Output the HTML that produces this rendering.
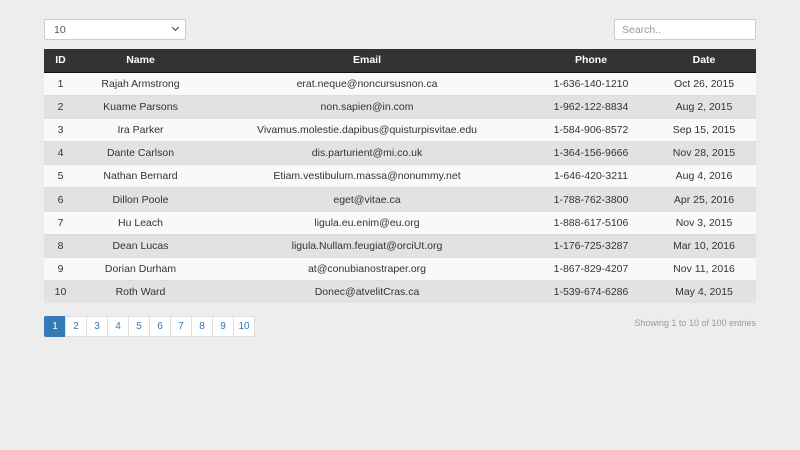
<!DOCTYPE html><html><head><style>
body{margin:0;background:#ededed;font-family:"Liberation Sans",sans-serif;font-size:10.5px;color:#333;width:800px;height:450px;position:relative;overflow:hidden}
.sel{position:absolute;left:44px;top:19px;width:142px;height:21px;background:#fff;border:1px solid #ccc;border-radius:2px;box-sizing:border-box;padding:4px 9px;color:#555}
.sel:after{content:"";position:absolute;right:7px;top:5px;width:4px;height:4px;border-right:1.3px solid #333;border-bottom:1.3px solid #333;transform:rotate(45deg)}
.srch{position:absolute;left:614px;top:19px;width:142px;height:21px;background:#fff;border:1px solid #ccc;border-radius:2px;box-sizing:border-box;padding:4px 7px;color:#999}
table{position:absolute;left:44px;top:49px;width:712px;border-collapse:collapse;table-layout:fixed}
th{background:#333;color:#fff;font-weight:bold;height:23px;padding:0;border-bottom:1px solid #111;box-sizing:border-box}
td{height:22.2px;padding:0;text-align:center;border-top:1px solid #ddd}
tr:nth-child(odd) td{background:#f9f9f9}tr:nth-child(even) td{background:#e2e2e2}
.pg{position:absolute;left:44px;top:316px;display:flex}
.pg span{display:block;box-sizing:border-box;width:22px;height:21px;line-height:19px;text-align:center;background:#fff;border:1px solid #ddd;margin-left:-1px;color:#337ab7;font-size:10px}
.pg span.a{background:#337ab7;color:#fff;border-color:#337ab7;border-radius:2px 0 0 2px;margin-left:0}
.pg span:last-child{width:22px}
.info{position:absolute;right:44px;top:318px;color:#999;font-size:9px}
</style></head><body>
<div class="sel">10</div><div class="srch">Search..</div>
<table><colgroup><col style="width:33px"><col style="width:127px"><col style="width:326px"><col style="width:122px"><col style="width:104px"></colgroup>
<thead><tr><th>ID</th><th>Name</th><th>Email</th><th>Phone</th><th>Date</th></tr></thead><tbody>
<tr><td>1</td><td>Rajah Armstrong</td><td>erat.neque@noncursusnon.ca</td><td>1-636-140-1210</td><td>Oct 26, 2015</td></tr>
<tr><td>2</td><td>Kuame Parsons</td><td>non.sapien@in.com</td><td>1-962-122-8834</td><td>Aug 2, 2015</td></tr>
<tr><td>3</td><td>Ira Parker</td><td>Vivamus.molestie.dapibus@quisturpisvitae.edu</td><td>1-584-906-8572</td><td>Sep 15, 2015</td></tr>
<tr><td>4</td><td>Dante Carlson</td><td>dis.parturient@mi.co.uk</td><td>1-364-156-9666</td><td>Nov 28, 2015</td></tr>
<tr><td>5</td><td>Nathan Bernard</td><td>Etiam.vestibulum.massa@nonummy.net</td><td>1-646-420-3211</td><td>Aug 4, 2016</td></tr>
<tr><td>6</td><td>Dillon Poole</td><td>eget@vitae.ca</td><td>1-788-762-3800</td><td>Apr 25, 2016</td></tr>
<tr><td>7</td><td>Hu Leach</td><td>ligula.eu.enim@eu.org</td><td>1-888-617-5106</td><td>Nov 3, 2015</td></tr>
<tr><td>8</td><td>Dean Lucas</td><td>ligula.Nullam.feugiat@orciUt.org</td><td>1-176-725-3287</td><td>Mar 10, 2016</td></tr>
<tr><td>9</td><td>Dorian Durham</td><td>at@conubianostraper.org</td><td>1-867-829-4207</td><td>Nov 11, 2016</td></tr>
<tr><td>10</td><td>Roth Ward</td><td>Donec@atvelitCras.ca</td><td>1-539-674-6286</td><td>May 4, 2015</td></tr>
</tbody></table>
<div class="pg"><span class="a">1</span><span>2</span><span>3</span><span>4</span><span>5</span><span>6</span><span>7</span><span>8</span><span>9</span><span>10</span></div>
<div class="info">Showing 1 to 10 of 100 entries</div>
</body></html>
